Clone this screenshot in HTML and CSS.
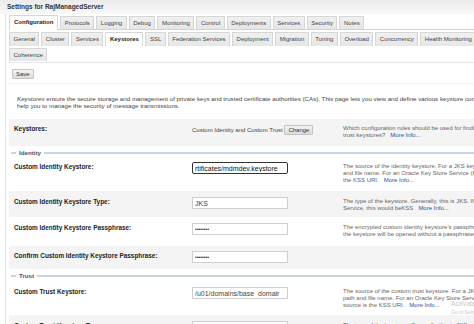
FILE: index.html
```html
<!DOCTYPE html>
<html>
<head>
<meta charset="utf-8">
<title>Settings for RajManagedServer</title>
<link rel="stylesheet" href="styles.css">
</head>
<body>
<div class="page">
	<div class="title">Settings for RajManagedServer</div>
	<div class="panel">
		<div class="tabs main">
			<span class="tab on">Configuration</span>
			<span class="tab">Protocols</span>
			<span class="tab">Logging</span>
			<span class="tab">Debug</span>
			<span class="tab">Monitoring</span>
			<span class="tab">Control</span>
			<span class="tab">Deployments</span>
			<span class="tab">Services</span>
			<span class="tab">Security</span>
			<span class="tab">Notes</span>
		</div>
		<div class="tabs sub">
			<span class="tab">General</span>
			<span class="tab">Cluster</span>
			<span class="tab">Services</span>
			<span class="tab on">Keystores</span>
			<span class="tab">SSL</span>
			<span class="tab">Federation Services</span>
			<span class="tab">Deployment</span>
			<span class="tab">Migration</span>
			<span class="tab">Tuning</span>
			<span class="tab">Overload</span>
			<span class="tab">Concurrency</span>
			<span class="tab">Health Monitoring</span>
		</div>
		<div class="tabs sub last">
			<span class="tab">Coherence</span>
		</div>

		<div class="bar"><button class="btn">Save</button></div>

		<p class="intro"><i>Keystores</i> ensure the secure storage and management of private keys and trusted certificate authorities (CAs). This page lets you view and define various keystore configurations. These configurations<br>help you to manage the security of message transmissions.</p>

		<table class="form">
			<tr class="alt r27">
				<td class="lbl">Keystores:</td>
				<td class="val">Custom Identity and Custom Trust <button class="btn">Change</button></td>
				<td class="help">Which configuration rules should be used for finding the server's identity and<br>trust keystores? &nbsp; <a href="#">More Info...</a></td>
			</tr>
			<tr class="legend"><td colspan="3"><div class="sep"><span>Identity</span></div></td></tr>
			<tr class="r35">
				<td class="lbl">Custom Identity Keystore:</td>
				<td class="val"><input class="field focus" value="rtificates/mdmdev.keystore"></td>
				<td class="help">The source of the identity keystore. For a JKS keystore, the source is the path<br>and file name. For an Oracle Key Store Service (KSS) keystore, the source is<br>the KSS URI. &nbsp; <a href="#">More Info...</a></td>
			</tr>
			<tr class="alt r26">
				<td class="lbl">Custom Identity Keystore Type:</td>
				<td class="val"><input class="field" value="JKS"></td>
				<td class="help">The type of the keystore. Generally, this is JKS. If using the Oracle Key Store<br>Service, this would beKSS &nbsp; <a href="#">More Info...</a></td>
			</tr>
			<tr class="r29">
				<td class="lbl">Custom Identity Keystore Passphrase:</td>
				<td class="val"><input class="field pw" type="password" value="secretpw"></td>
				<td class="help">The encrypted custom identity keystore's passphrase. If empty or null, then<br>the keystore will be opened without a passphrase.</td>
			</tr>
			<tr class="alt r23">
				<td class="lbl">Confirm Custom Identity Keystore Passphrase:</td>
				<td class="val"><input class="field pw" type="password" value="secretpw"></td>
				<td class="help"></td>
			</tr>
			<tr class="legend trust"><td colspan="3"><div class="sep"><span>Trust</span></div></td></tr>
			<tr class="r34">
				<td class="lbl">Custom Trust Keystore:</td>
				<td class="val"><input class="field" value="/u01/domains/base_domair"></td>
				<td class="help">The source of the custom trust keystore. For a JKS keystore, the source is the<br>path and file name. For an Oracle Key Store Service (KSS) keystore, the<br>source is the KSS URI. &nbsp; <a href="#">More Info...</a></td>
			</tr>
			<tr class="alt r26">
				<td class="lbl">Custom Trust Keystore Type:</td>
				<td class="val"><input class="field" value="JKS"></td>
				<td class="help">The type of the keystore. Generally, this is JKS.</td>
			</tr>
		</table>
	</div>
	<div class="watermark">Activate Windows<br><small>Go to Settings to activate Windows.</small></div>
</div>
</body>
</html>
```

FILE: styles.css
```css
body {
	margin: 0;
	overflow: hidden;
	background: white;
	font-family: "Liberation Sans", Arial, sans-serif;
	font-size: 6px;
	color: #333;
}
.page {
	width: 760px;
	position: relative;
}
.title {
	height: 14px;
	line-height: 13px;
	padding-left: 7px;
	font-size: 6.5px;
	font-weight: bold;
	color: #333;
	background: linear-gradient(#ebebeb, #f8f8f8);
}
.panel {
	margin-left: 5px;
	border-left: 1px solid #e0e4e8;
	padding-left: 3px;
}

/* tab rows */
.tabs {
	display: flex;
	align-items: flex-end;
	gap: 2px;
	padding-top: 2px;
}
.tabs.main {
	height: 14px;
	padding-top: 1px;
	border-bottom: 1px solid #c8d5e0;
}
.tabs.last {
	border-bottom: 1px solid #dfe6ec;
	padding-bottom: 1px;
}
.tab {
	height: 12px;
	line-height: 12px;
	padding: 0 3.5px;
	background: linear-gradient(#f0f0f0, #e6e6e6);
	border: 1px solid #d6d6d6;
	border-bottom: none;
	color: #444;
}
.tab.on {
	background: white;
	font-weight: bold;
	color: #222;
}
.main .tab.on {
	height: 14px;
	line-height: 13px;
	margin-bottom: -1px;
	padding: 0 4px;
}
.sub .tab {
	height: 13px;
	line-height: 13px;
}
.sub.last .tab {
	height: 12px;
	line-height: 12px;
}

.bar {
	padding: 6px 0 4px 3px;
	border-bottom: 1px solid #eef0f2;
}
.btn {
	font-family: inherit;
	font-size: 6px;
	height: 10px;
	line-height: 8px;
	padding: 0 3px;
	margin: 0;
	background: linear-gradient(#f4f4f4, #dcdcdc);
	border: 1px solid #c4c4c4;
	border-radius: 1px;
	color: #333;
}
.intro {
	margin: 0;
	padding: 12px 0 0 8px;
	height: 23px;
	font-size: 6.2px;
	line-height: 6.5px;
	color: #444;
}

/* form */
.form {
	border-collapse: collapse;
	width: 740px;
}
.form td {
	vertical-align: top;
	padding: 7px 0 0;
	line-height: 7px;
}
.form tr.alt td {
	background: #f4f4f4;
}
.r23 { height: 23px; }
.r26 { height: 26px; }
.r27 { height: 27px; }
.r29 { height: 29px; }
.r34 { height: 34px; }
.r35 { height: 35px; }
.r23 td { padding-top: 6px; }
.r27 td { padding-top: 6px; }

.lbl {
	width: 178px;
	padding-left: 5px !important;
	font-size: 6.4px;
	font-weight: bold;
	color: #222;
}
.val {
	width: 151px;
	color: #444;
}
.val .btn {
	vertical-align: middle;
}
.help {
	color: #666;
}
.help a {
	color: #2d4f9c;
	text-decoration: none;
}
.field {
	display: block;
	box-sizing: border-box;
	width: 96px;
	height: 12px;
	margin-top: -1px;
	padding: 0 2px;
	font-family: "Liberation Sans", Arial, sans-serif;
	font-size: 7px;
	color: #444;
	border: 1px solid #cfcfcf;
	background: white;
	outline: none;
}
.field.focus {
	border: 1px solid #333;
	border-radius: 2px;
	color: #111;
}
.field.pw {
	font-size: 5px;
	color: #222;
}

.legend {
	height: 10px;
}
.legend.trust {
	height: 12px;
}
.legend td {
	padding: 3px 0 0 !important;
}
.sep {
	display: flex;
	align-items: center;
	gap: 3px;
	padding-left: 2px;
	font-size: 6.2px;
	font-weight: bold;
	color: #3f5870;
}
.sep::before {
	content: "";
	width: 5px;
	border-top: 2px solid #c8d4de;
}
.sep::after {
	content: "";
	flex: 1;
	border-top: 2px solid #c8d4de;
}

.watermark {
	position: absolute;
	left: 451px;
	top: 300px;
	font-size: 7px;
	line-height: 8px;
	color: #c8c8c8;
}
.watermark small {
	font-size: 5px;
}
```
